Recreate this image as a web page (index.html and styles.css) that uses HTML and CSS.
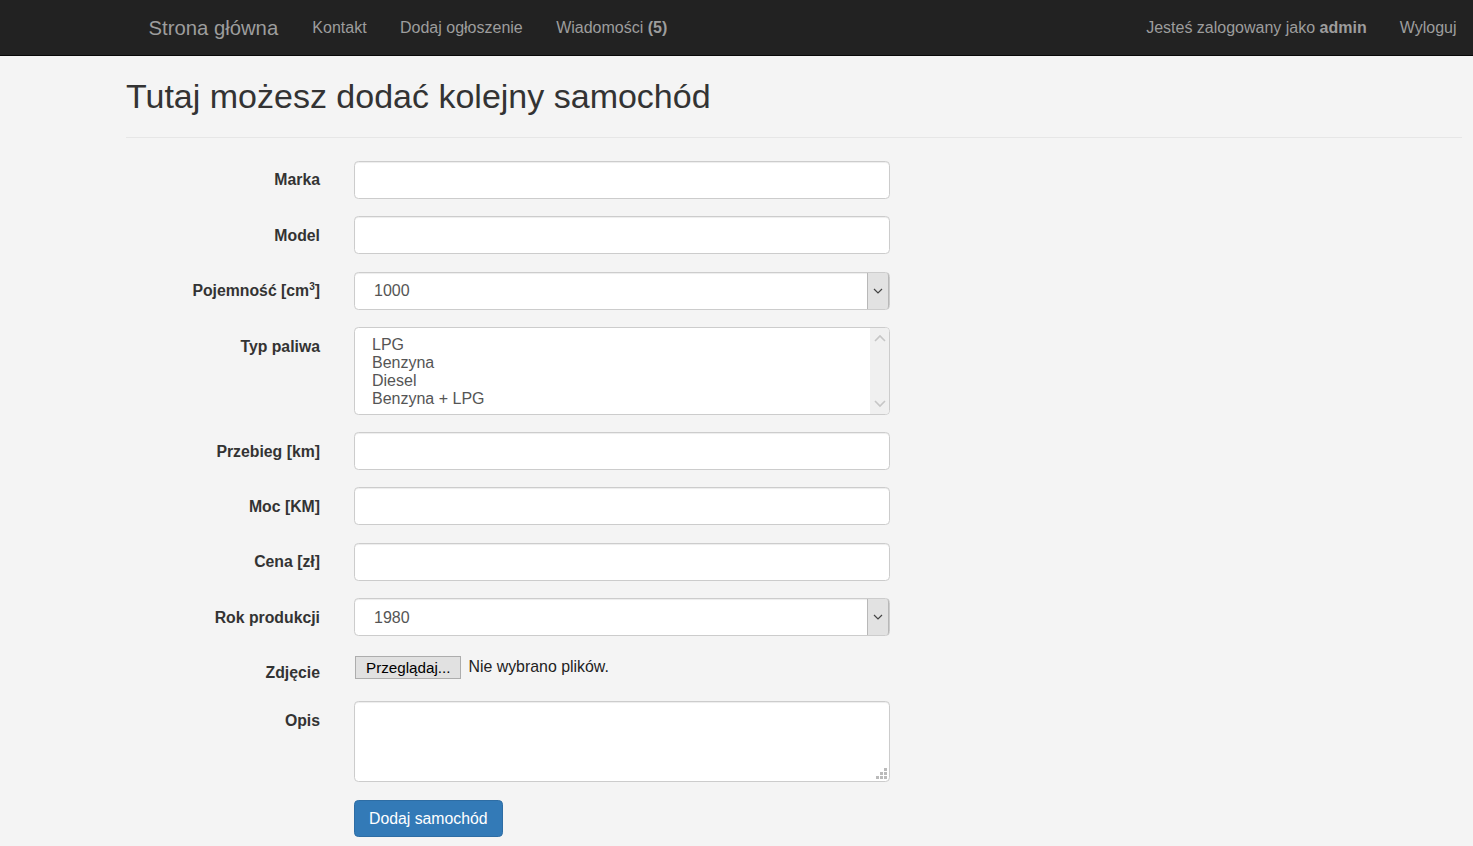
FILE: index.html
```html
<!DOCTYPE html>
<html lang="pl">
<head>
    <meta charset="UTF-8">
    <meta name="viewport" content="width=device-width, initial-scale=1.0">
    <title>Dodaj samochód</title>
    <link rel="stylesheet" href="styles.css">
</head>
<body>

    <!-- Top navigation -->
    <nav class="navbar">
        <a class="navbar-brand" href="#">Strona główna</a>
        <ul class="nav">
            <li><a href="#">Kontakt</a></li>
            <li><a href="#">Dodaj ogłoszenie</a></li>
            <li><a href="#">Wiadomości <b>(5)</b></a></li>
        </ul>
        <div class="nav-right">
            <span class="navbar-text">Jesteś zalogowany jako <b>admin</b></span>
            <a href="#">Wyloguj</a>
        </div>
    </nav>

    <div class="container">
        <div class="page-header">
            <h1>Tutaj możesz dodać kolejny samochód</h1>
        </div>

        <form class="car-form">
            <label for="marka">Marka</label>
            <input id="marka" class="form-control" type="text">

            <label for="model">Model</label>
            <input id="model" class="form-control" type="text">

            <label for="pojemnosc">Pojemność [cm<sup>3</sup>]</label>
            <div class="select-wrap">
                <select id="pojemnosc" class="form-control">
                    <option>1000</option>
                    <option>1200</option>
                    <option>1400</option>
                    <option>1600</option>
                    <option>2000</option>
                </select>
                <span class="select-arrow">
                    <svg width="10" height="6" viewBox="0 0 10 6"><path d="M1 1 L5 5 L9 1" fill="none" stroke="#444" stroke-width="1.2"/></svg>
                </span>
            </div>

            <label>Typ paliwa</label>
            <div class="listbox" role="listbox">
                <div class="option">LPG</div>
                <div class="option">Benzyna</div>
                <div class="option">Diesel</div>
                <div class="option">Benzyna + LPG</div>
                <div class="scrollbar">
                    <svg width="12" height="8" viewBox="0 0 12 8"><path d="M1 7 L6 2 L11 7" fill="none" stroke="#c6c6c6" stroke-width="1.6"/></svg>
                    <svg width="12" height="8" viewBox="0 0 12 8"><path d="M1 1 L6 6 L11 1" fill="none" stroke="#c6c6c6" stroke-width="1.6"/></svg>
                </div>
            </div>

            <label for="przebieg">Przebieg [km]</label>
            <input id="przebieg" class="form-control" type="text">

            <label for="moc">Moc [KM]</label>
            <input id="moc" class="form-control" type="text">

            <label for="cena">Cena [zł]</label>
            <input id="cena" class="form-control" type="text">

            <label for="rok">Rok produkcji</label>
            <div class="select-wrap">
                <select id="rok" class="form-control">
                    <option>1980</option>
                    <option>1981</option>
                    <option>1982</option>
                </select>
                <span class="select-arrow">
                    <svg width="10" height="6" viewBox="0 0 10 6"><path d="M1 1 L5 5 L9 1" fill="none" stroke="#444" stroke-width="1.2"/></svg>
                </span>
            </div>

            <label>Zdjęcie</label>
            <div class="file-input">
                <button type="button" class="file-btn">Przeglądaj...</button>
                <span class="file-name">Nie wybrano plików.</span>
            </div>

            <label for="opis">Opis</label>
            <div class="textarea-wrap">
                <textarea id="opis" class="form-control"></textarea>
                <svg class="grip" width="11" height="11" viewBox="0 0 11 11">
                    <rect x="8" y="0" width="3" height="3" fill="#bbb"/>
                    <rect x="4" y="4" width="3" height="3" fill="#bbb"/>
                    <rect x="8" y="4" width="3" height="3" fill="#bbb"/>
                    <rect x="0" y="8" width="3" height="3" fill="#bbb"/>
                    <rect x="4" y="8" width="3" height="3" fill="#bbb"/>
                    <rect x="8" y="8" width="3" height="3" fill="#bbb"/>
                </svg>
            </div>

            <div class="form-actions">
                <button type="submit" class="btn-primary">Dodaj samochód</button>
            </div>
        </form>
    </div>

</body>
</html>
```

FILE: styles.css
```css
body {
    margin: 0;
    font-family: "Liberation Sans", Arial, sans-serif;
    font-size: 15.8px;
    line-height: 1.43;
    color: #333;
    background-color: #f4f4f4;
}

/* Navbar */
.navbar {
    display: flex;
    align-items: center;
    height: 56px;
    box-sizing: border-box;
    padding-left: 132px;
    background-color: #222;
    border-bottom: 1px solid #080808;
    font-size: 16px;
}

.navbar a {
    color: #9d9d9d;
    text-decoration: none;
}

.navbar-brand {
    font-size: 20.3px;
    padding: 0 16.5px;
    line-height: 50px;
}

.nav {
    display: flex;
    list-style: none;
    margin: 0;
    padding: 0 0 0 1px;
}

.nav a {
    display: block;
    padding: 0 16.7px;
    line-height: 50px;
}

.nav-right {
    margin-left: auto;
    display: flex;
    align-items: center;
    line-height: 50px;
}

.navbar-text {
    color: #9d9d9d;
    margin-right: 16.5px;
}

.nav-right a {
    padding: 0 16.5px;
}

/* Page */
.container {
    padding: 0 11px 0 126px;
}

.page-header {
    padding-top: 22px;
    padding-bottom: 22px;
    margin-bottom: 22.5px;
    border-bottom: 1px solid #e6e6e6;
}

.page-header h1 {
    margin: 0;
    font-size: 34px;
    font-weight: 500;
    line-height: 1.1;
    color: #333;
}

/* Form */
.car-form {
    display: grid;
    grid-template-columns: 194px 536px;
    column-gap: 34px;
    row-gap: 17.4px;
    align-items: start;
}

.car-form label {
    text-align: right;
    font-weight: bold;
    padding-top: 9.5px;
    line-height: 20.6px;
}

.car-form label sup {
    font-size: 10px;
    line-height: 0;
}

.form-control {
    display: block;
    width: 100%;
    height: 38px;
    box-sizing: border-box;
    padding: 6.6px 13.2px;
    font-family: inherit;
    font-size: 16px;
    color: #555;
    background-color: #fff;
    border: 1px solid #ccc;
    border-radius: 4.4px;
    box-shadow: inset 0 1px 1px rgba(0, 0, 0, 0.075);
    margin: 0;
}

.select-wrap {
    position: relative;
}

.select-wrap select {
    appearance: none;
    -webkit-appearance: none;
    padding-left: 19px;
}

.select-arrow {
    position: absolute;
    top: 1px;
    right: 1px;
    bottom: 1px;
    width: 20px;
    display: flex;
    align-items: center;
    justify-content: center;
    background-color: #e2e2e2;
    border-left: 1px solid #b8b8b8;
    border-right: 1px solid #b8b8b8;
    border-radius: 0 3px 3px 0;
    pointer-events: none;
}

.listbox {
    position: relative;
    height: 87.6px;
    box-sizing: border-box;
    padding: 8px 0 0 17px;
    background-color: #fff;
    border: 1px solid #ccc;
    border-radius: 4.4px;
    color: #555;
    font-size: 16px;
    overflow: hidden;
}

.listbox .option {
    line-height: 18px;
}

.scrollbar {
    position: absolute;
    top: 0;
    right: 0;
    bottom: 0;
    width: 19px;
    background-color: #f0f0f0;
    display: flex;
    flex-direction: column;
    justify-content: space-between;
    align-items: center;
    padding: 6px 0;
    box-sizing: border-box;
}

.file-input {
    display: flex;
    align-items: center;
    margin-top: 2px;
}

.file-btn {
    height: 23px;
    padding: 0 10px;
    font-family: inherit;
    font-size: 15.2px;
    color: #000;
    background-color: #e1e1e1;
    border: 1px solid #adadad;
    margin-left: 1px;
}

.file-name {
    margin-left: 7px;
    font-size: 15.9px;
    color: #222;
}

.textarea-wrap {
    position: relative;
}

.textarea-wrap textarea {
    height: 81.4px;
    resize: none;
}

.grip {
    position: absolute;
    right: 3px;
    bottom: 3px;
}

.form-actions {
    grid-column: 2;
}

.btn-primary {
    height: 37.5px;
    padding: 0 14px;
    font-family: inherit;
    font-size: 15.8px;
    color: #fff;
    background-color: #337ab7;
    border: 1px solid #2e6da4;
    border-radius: 4.4px;
    cursor: pointer;
}
```
